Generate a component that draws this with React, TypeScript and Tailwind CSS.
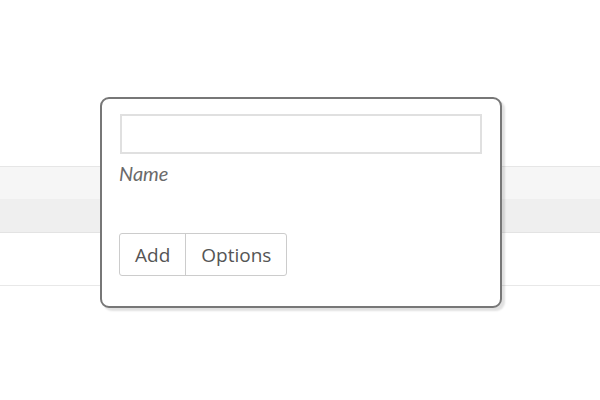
import React from 'react';

export default function App() {
  return (
    <div className="relative w-[600px] h-[400px] bg-white overflow-hidden">
      {/* table rows behind the popup */}
      <div className="pt-[166px]">
        <div className="h-[33px] border-t border-[#e6e6e6] bg-[#f6f6f6]" />
        <div className="h-[34px] border-b border-[#e3e3e3] bg-[#efefef]" />
        <div className="h-[53px] border-b border-[#e8e8e8]" />
      </div>

      <div className="absolute left-[100px] top-[97px] w-[402px] h-[211px] rounded-[9px] border-2 border-[#777777] bg-white shadow-[3px_3px_2px_rgba(0,0,0,0.12)] px-[18px] pt-[15px]">
        <input
          type="text"
          className="block w-[362px] h-[40px] border-2 border-[#e0e0e0] bg-white outline-none"
        />
        <div className="mt-[5px] text-[20px] italic text-[#6a6a6a] leading-[28px] font-['Lato',sans-serif] -ml-[1px]">
          Name
        </div>
        <div className="mt-[46px] -ml-[1px] inline-flex h-[43px] rounded-[3px] border border-[#cccccc] text-[19px] text-[#555555] font-['Open_Sans',sans-serif]">
          <button className="px-[15px] pt-[2px] border-r border-[#cccccc]">Add</button>
          <button className="px-[15px] pt-[2px]">Options</button>
        </div>
      </div>
    </div>
  );
}
